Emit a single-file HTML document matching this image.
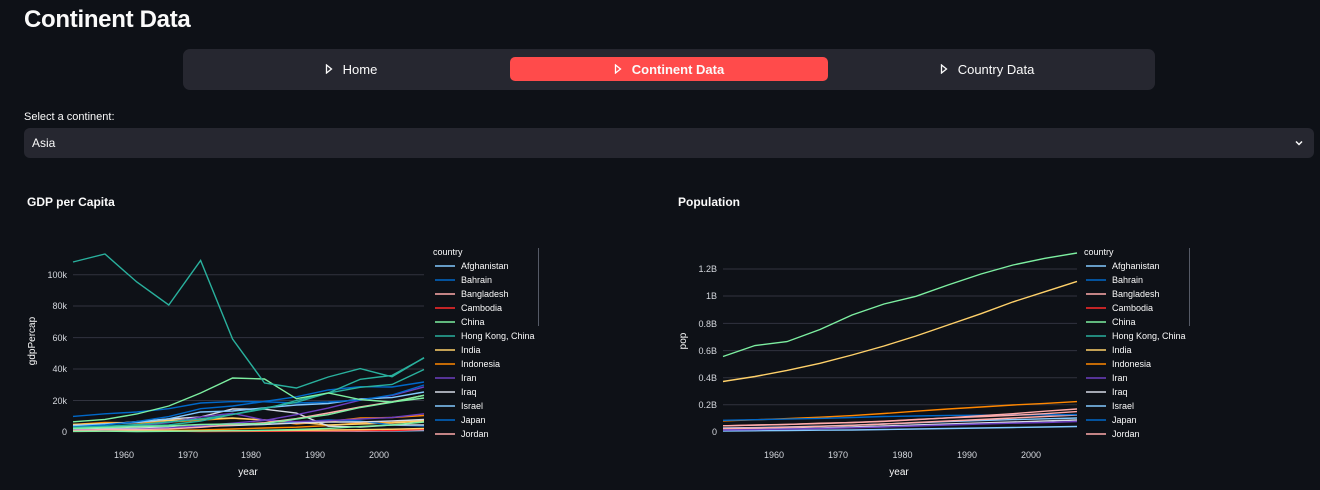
<!DOCTYPE html>
<html><head><meta charset="utf-8"><style>
body{margin:0;width:1320px;height:490px;background:#0e1117;overflow:hidden;font-family:"Liberation Sans",sans-serif;color:#fafafa;position:relative}
.a{position:absolute}
h1{position:absolute;left:24px;top:6px;margin:0;font-size:24px;font-weight:bold;letter-spacing:-0.3px}
.nav{left:183px;top:49px;width:972px;height:41px;background:#262730;border-radius:7px}
.btn{position:absolute;top:8px;height:24px;width:318px;border-radius:5px;font-size:13px;display:flex;align-items:center;justify-content:center;gap:10px}
.sel{left:24px;top:128px;width:1290px;height:30px;background:#262730;border-radius:6px;font-size:12px}
svg text{font-family:"Liberation Sans",sans-serif}
</style></head><body>
<h1>Continent Data</h1>
<div class="a nav">
 <div class="btn" style="left:9px"><svg width="8" height="10"><path d="M1.5 1 L6.5 5 L1.5 9 Z" fill="none" stroke="#fafafa" stroke-width="1.3"/></svg><span>Home</span></div>
 <div class="btn" style="left:327px;background:#ff4b4b;font-weight:bold"><svg width="8" height="10"><path d="M1.5 1 L6.5 5 L1.5 9 Z" fill="none" stroke="#fff" stroke-width="1.3"/></svg><span>Continent Data</span></div>
 <div class="btn" style="left:645px"><svg width="8" height="10"><path d="M1.5 1 L6.5 5 L1.5 9 Z" fill="none" stroke="#fafafa" stroke-width="1.3"/></svg><span>Country Data</span></div>
</div>
<div class="a" style="left:24px;top:111px;font-size:11px">Select a continent:</div>
<div class="a sel"><span class="a" style="left:8px;top:8px">Asia</span>
<svg class="a" style="right:10px;top:10px" width="10" height="10"><path d="M2 3.5 L5 6.5 L8 3.5" fill="none" stroke="#fafafa" stroke-width="1.5"/></svg></div>

<svg class="a" style="left:0;top:0" width="1320" height="490">
<g font-size="12" font-weight="bold" fill="#fafafa"><text x="27" y="206">GDP per Capita</text><text x="678" y="206">Population</text></g>
<g stroke="#31333f" stroke-width="1">
<line x1="73" x2="424" y1="274.7" y2="274.7"/><line x1="73" x2="424" y1="306" y2="306"/><line x1="73" x2="424" y1="337.6" y2="337.6"/><line x1="73" x2="424" y1="369" y2="369"/><line x1="73" x2="424" y1="400.5" y2="400.5"/>
<line x1="723" x2="1077" y1="269" y2="269"/><line x1="723" x2="1077" y1="296" y2="296"/><line x1="723" x2="1077" y1="323.4" y2="323.4"/><line x1="723" x2="1077" y1="350.6" y2="350.6"/><line x1="723" x2="1077" y1="377.7" y2="377.7"/><line x1="723" x2="1077" y1="404.8" y2="404.8"/>
</g>
<g font-size="9" fill="#d5d8de" text-anchor="end">
<text x="67" y="278">100k</text><text x="67" y="309">80k</text><text x="67" y="341">60k</text><text x="67" y="372">40k</text><text x="67" y="404">20k</text><text x="67" y="435">0</text>
<text x="717" y="272">1.2B</text><text x="717" y="299">1B</text><text x="717" y="327">0.8B</text><text x="717" y="354">0.6B</text><text x="717" y="381">0.4B</text><text x="717" y="408">0.2B</text><text x="717" y="435">0</text>
</g>
<g font-size="9" fill="#d5d8de" text-anchor="middle">
<text x="124" y="458">1960</text><text x="188" y="458">1970</text><text x="251" y="458">1980</text><text x="315" y="458">1990</text><text x="379" y="458">2000</text>
<text x="774" y="458">1960</text><text x="838" y="458">1970</text><text x="902.5" y="458">1980</text><text x="967" y="458">1990</text><text x="1031" y="458">2000</text>
</g>
<g font-size="10" fill="#fafafa" text-anchor="middle"><text x="248" y="475">year</text><text x="899" y="475">year</text>
<text transform="translate(35,341) rotate(-90)">gdpPercap</text><text transform="translate(686,341) rotate(-90)">pop</text></g>
<g fill="none" stroke-width="1.4" transform="translate(73,0) scale(1.0724,1) translate(-68,0)">
<g style="vector-effect:non-scaling-stroke">
<polyline vector-effect="non-scaling-stroke" stroke="#83c9ff" points="68,431 97.8,430.9 127.5,430.8 157.3,430.8 187,431 216.8,430.6 246.6,431 276.3,431 306,431.2 335.8,431.3 365.5,431 395.3,430.6"/>
<polyline vector-effect="non-scaling-stroke" stroke="#ffabab" points="68,430.8 97.8,430.8 127.5,430.6 157.3,430.9 187,431 216.8,430.9 246.6,430.6 276.3,430.5 306,430.3 335.8,430 365.5,429.8 395.3,429.3"/>
<polyline vector-effect="non-scaling-stroke" stroke="#ff2b2b" points="68,431.4 97.8,431.3 127.5,431.2 157.3,431.1 187,431.5 216.8,431.4 246.6,431.3 276.3,431 306,430.9 335.8,430.8 365.5,430.5 395.3,429.5"/>
<polyline vector-effect="non-scaling-stroke" stroke="#ff8700" points="68,430.6 97.8,430.4 127.5,430.5 157.3,430.3 187,429.9 216.8,429 246.6,428 276.3,427.2 306,425.6 335.8,422.8 365.5,422.5 395.3,420"/>
<polyline vector-effect="non-scaling-stroke" stroke="#ff8700" points="68,424.4 97.8,422.4 127.5,422.9 157.3,422.2 187,420.2 216.8,418.3 246.6,420 276.3,424 306,421.6 335.8,418 365.5,417.5 395.3,415.5"/>
<polyline vector-effect="non-scaling-stroke" stroke="#ffd16a" points="68,431 97.8,430.9 127.5,430.7 157.3,430.8 187,430.8 216.8,430.8 246.6,430.6 276.3,430.3 306,430 335.8,429.7 365.5,429.2 395.3,428.5"/>
<polyline vector-effect="non-scaling-stroke" stroke="#ffd16a" points="68,424.5 97.8,423.5 127.5,422.2 157.3,420.5 187,419 216.8,418 246.6,420 276.3,422 306,425 335.8,424 365.5,423 395.3,421"/>
<polyline vector-effect="non-scaling-stroke" stroke="#0068c9" points="68,430 97.8,429.3 127.5,429 157.3,428.2 187,426 216.8,425 246.6,424.5 276.3,422 306,420 335.8,421 365.5,425 395.3,426"/>
<polyline vector-effect="non-scaling-stroke" stroke="#d5dae5" points="68,425.5 97.8,424.3 127.5,421.6 157.3,419 187,416.9 216.8,408.9 246.6,409.2 276.3,413 306,426.2 335.8,427.1 365.5,425 395.3,424.9"/>
<polyline vector-effect="non-scaling-stroke" stroke="#d5dae5" points="68,429 97.8,428.5 127.5,428 157.3,427.3 187,426.5 216.8,425.5 246.6,424.4 276.3,423 306,422 335.8,422 365.5,421 395.3,419.5"/>
<polyline vector-effect="non-scaling-stroke" stroke="#6d3fc0" points="68,427.3 97.8,426.8 127.5,425.4 157.3,422.7 187,416.9 216.8,413.3 246.6,420 276.3,421.6 306,420.7 335.8,419 365.5,417.5 395.3,413.8"/>
<polyline vector-effect="non-scaling-stroke" stroke="#6d3fc0" points="68,430.1 97.8,429.6 127.5,429.2 157.3,427.9 187,425.7 216.8,423.2 246.6,420.4 276.3,414.7 306,408.1 335.8,400.2 365.5,395.5 395.3,386.9"/>
<polyline vector-effect="non-scaling-stroke" stroke="#83c9ff" points="68,425.7 97.8,424 127.5,422.6 157.3,418.8 187,412 216.8,411 246.6,407.8 276.3,405 306,403.5 335.8,399 365.5,397.6 395.3,392"/>
<polyline vector-effect="non-scaling-stroke" stroke="#ffabab" points="68,430.4 97.8,429.6 127.5,429.6 157.3,428.9 187,427.3 216.8,424.8 246.6,422.7 276.3,418.6 306,413 335.8,407 365.5,401.8 395.3,395.3"/>
<polyline vector-effect="non-scaling-stroke" stroke="#0068c9" points="68,427 97.8,425 127.5,421.6 157.3,416.6 187,408.7 216.8,406 246.6,401.5 276.3,396.8 306,390 335.8,386.7 365.5,387 395.3,382"/>
<polyline vector-effect="non-scaling-stroke" stroke="#0068c9" points="68,416.4 97.8,413.8 127.5,412 157.3,408.7 187,403 216.8,401.6 246.6,401.8 276.3,403 306,402 335.8,400 365.5,395 395.3,385"/>
<polyline vector-effect="non-scaling-stroke" stroke="#29b09d" points="68,427.3 97.8,426.3 127.5,424.6 157.3,422 187,419 216.8,414.4 246.6,409 276.3,400.5 306,393 335.8,387.3 365.5,384.5 395.3,369.5"/>
<polyline vector-effect="non-scaling-stroke" stroke="#29b09d" points="68,428.4 97.8,427.3 127.5,426 157.3,425 187,421 216.8,414.4 246.6,408 276.3,402.3 306,393 335.8,379.3 365.5,375.4 395.3,358"/>
<polyline vector-effect="non-scaling-stroke" stroke="#7defa1" points="68,431.4 97.8,431.2 127.5,431.5 157.3,431.3 187,431.1 216.8,430.8 246.6,430.3 276.3,429.5 306,428.4 335.8,426.6 365.5,425 395.3,422"/>
<polyline vector-effect="non-scaling-stroke" stroke="#7defa1" points="68,428.5 97.8,427.5 127.5,426.5 157.3,426 187,424.5 216.8,424 246.6,423.5 276.3,419 306,414.7 335.8,407.5 365.5,402.3 395.3,395.3"/>
<polyline vector-effect="non-scaling-stroke" stroke="#7defa1" points="68,421.8 97.8,419.4 127.5,414 157.3,406 187,393 216.8,378 246.6,379 276.3,398.7 306,393 335.8,399.6 365.5,402 395.3,398"/>
<polyline vector-effect="non-scaling-stroke" stroke="#29b09d" points="68,262 97.8,254 127.5,282 157.3,305 187,260.5 216.8,339 246.6,383 276.3,388 306,377 335.8,368.6 365.5,376.8 395.3,357.6"/>
</g></g>
<g fill="none" stroke-width="1.4">
<polyline stroke="#83c9ff" points="723,431 755,430.8 787,430.5 820,430.2 852,430 884,429.5 916,429 948,428.5 981,428 1013,427.5 1045,427 1077,426.5"/>
<polyline stroke="#d5dae5" points="723,429.5 755,429 787,428.5 820,428 852,427 884,426 916,425 948,424 981,423 1013,422 1045,421 1077,420"/>
<polyline stroke="#83c9ff" points="723,428 755,427.6 787,427 820,426.2 852,425.2 884,424 916,422.8 948,421.5 981,420.5 1013,419.6 1045,418.8 1077,418"/>
<polyline stroke="#ffabab" points="723,428.5 755,428 787,427.2 820,426.3 852,425.3 884,424 916,422.5 948,421 981,419.5 1013,418 1045,416.5 1077,415"/>
<polyline stroke="#ff8700" points="723,420.9 755,419.8 787,418.6 820,417.2 852,415.6 884,413.5 916,411.2 948,409 981,407 1013,405 1045,403.4 1077,401.6"/>
<polyline stroke="#0068c9" points="723,420.3 755,419.7 787,419.1 820,418.4 852,417.5 884,416.5 916,416 948,415.4 981,415.2 1013,414.9 1045,414.8 1077,414.6"/>
<polyline stroke="#ffabab" points="723,425.8 755,425.2 787,424.4 820,423.2 852,422.6 884,421.4 916,419.7 948,417.8 981,415.7 1013,413.7 1045,411.2 1077,409"/>
<polyline stroke="#ffabab" points="723,425.8 755,425 787,424.4 820,423.6 852,422.5 884,421.2 916,419.4 948,417.9 981,416.7 1013,415.3 1045,413.7 1077,411.6"/>
<polyline stroke="#6d3fc0" points="723,430 755,429.6 787,429 820,428.5 852,427.8 884,427 916,426 948,425 981,424 1013,423.2 1045,422.5 1077,421.5"/>
<polyline stroke="#ffd16a" points="723,381.5 755,376.5 787,370.4 820,363.3 852,355 884,346 916,336 948,325 981,313.7 1013,301.9 1045,291.7 1077,281.4"/>
<polyline stroke="#7defa1" points="723,356.5 755,345.5 787,341.6 820,329.5 852,315 884,304 916,296.3 948,285 981,274 1013,265 1045,258.3 1077,253"/>
</g>
<g font-size="9" fill="#fafafa">
<text x="433" y="255">country</text>
<text x="461" y="269">Afghanistan</text><text x="461" y="283">Bahrain</text><text x="461" y="297">Bangladesh</text><text x="461" y="311">Cambodia</text><text x="461" y="325">China</text><text x="461" y="339">Hong Kong, China</text><text x="461" y="353">India</text><text x="461" y="367">Indonesia</text><text x="461" y="381">Iran</text><text x="461" y="395">Iraq</text><text x="461" y="409">Israel</text><text x="461" y="423">Japan</text><text x="461" y="437">Jordan</text>
<text x="1084" y="255">country</text>
<text x="1112" y="269">Afghanistan</text><text x="1112" y="283">Bahrain</text><text x="1112" y="297">Bangladesh</text><text x="1112" y="311">Cambodia</text><text x="1112" y="325">China</text><text x="1112" y="339">Hong Kong, China</text><text x="1112" y="353">India</text><text x="1112" y="367">Indonesia</text><text x="1112" y="381">Iran</text><text x="1112" y="395">Iraq</text><text x="1112" y="409">Israel</text><text x="1112" y="423">Japan</text><text x="1112" y="437">Jordan</text>
</g>
<g stroke-width="1.5">
<g>
<line x1="435" x2="455" y1="266" y2="266" stroke="#83c9ff"/><line x1="435" x2="455" y1="280" y2="280" stroke="#0068c9"/><line x1="435" x2="455" y1="294" y2="294" stroke="#ffabab"/><line x1="435" x2="455" y1="308" y2="308" stroke="#ff2b2b"/><line x1="435" x2="455" y1="322" y2="322" stroke="#7defa1"/><line x1="435" x2="455" y1="336" y2="336" stroke="#29b09d"/><line x1="435" x2="455" y1="350" y2="350" stroke="#ffd16a"/><line x1="435" x2="455" y1="364" y2="364" stroke="#ff8700"/><line x1="435" x2="455" y1="378" y2="378" stroke="#6d3fc0"/><line x1="435" x2="455" y1="392" y2="392" stroke="#d5dae5"/><line x1="435" x2="455" y1="406" y2="406" stroke="#83c9ff"/><line x1="435" x2="455" y1="420" y2="420" stroke="#0068c9"/><line x1="435" x2="455" y1="434" y2="434" stroke="#ffabab"/>
</g>
<g transform="translate(651,0)">
<line x1="435" x2="455" y1="266" y2="266" stroke="#83c9ff"/><line x1="435" x2="455" y1="280" y2="280" stroke="#0068c9"/><line x1="435" x2="455" y1="294" y2="294" stroke="#ffabab"/><line x1="435" x2="455" y1="308" y2="308" stroke="#ff2b2b"/><line x1="435" x2="455" y1="322" y2="322" stroke="#7defa1"/><line x1="435" x2="455" y1="336" y2="336" stroke="#29b09d"/><line x1="435" x2="455" y1="350" y2="350" stroke="#ffd16a"/><line x1="435" x2="455" y1="364" y2="364" stroke="#ff8700"/><line x1="435" x2="455" y1="378" y2="378" stroke="#6d3fc0"/><line x1="435" x2="455" y1="392" y2="392" stroke="#d5dae5"/><line x1="435" x2="455" y1="406" y2="406" stroke="#83c9ff"/><line x1="435" x2="455" y1="420" y2="420" stroke="#0068c9"/><line x1="435" x2="455" y1="434" y2="434" stroke="#ffabab"/>
</g>
</g>
<line x1="538.5" x2="538.5" y1="248" y2="326" stroke="#555a66" stroke-width="1"/>
<line x1="1189.5" x2="1189.5" y1="248" y2="326" stroke="#555a66" stroke-width="1"/>
</svg>
</body></html>
